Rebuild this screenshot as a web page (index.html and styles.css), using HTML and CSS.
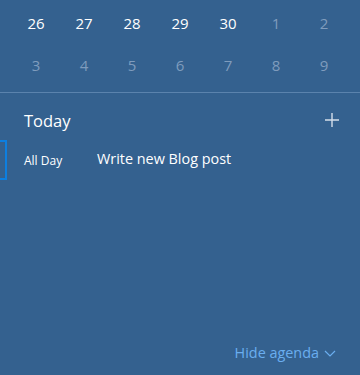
FILE: index.html
```html
<!DOCTYPE html>
<html>
<head>
<meta charset="utf-8">
<link rel="stylesheet" href="styles.css">
</head>
<body>
<div class="panel">
  <div class="cal">
    <span class="d">26</span><span class="d">27</span><span class="d">28</span><span class="d">29</span><span class="d">30</span><span class="d dim">1</span><span class="d dim">2</span>
    <span class="d dim">3</span><span class="d dim">4</span><span class="d dim">5</span><span class="d dim">6</span><span class="d dim">7</span><span class="d dim">8</span><span class="d dim">9</span>
  </div>
  <div class="divider"></div>
  <div class="agenda">
    <div class="head">
      <span class="today">Today</span>
      <svg class="plus" width="16" height="16" viewBox="0 0 16 16"><path d="M8 1v14M1 8h14" stroke="#d4deea" stroke-width="1.4" fill="none"/></svg>
    </div>
    <div class="event">
      <span class="mark"></span>
      <span class="when">All Day</span>
      <span class="title">Write new Blog post</span>
    </div>
  </div>
  <div class="foot">
    <span class="hide">Hide agenda</span>
    <svg class="chev" width="12" height="7" viewBox="0 0 12 7"><path d="M1 1l5 5 5-5" stroke="#6aaeef" stroke-width="1.2" fill="none"/></svg>
  </div>
</div>
</body>
</html>
```
FILE: styles.css
```css
html, body { margin: 0; padding: 0; }
body { background: #34618f; font-family: "Open Sans", "Noto Sans", sans-serif; }
.panel {
  width: 360px; height: 375px; background: #34618f;
  display: flex; flex-direction: column; overflow: hidden;
}
.cal {
  display: grid; grid-template-columns: repeat(7, 48px); grid-auto-rows: 42px;
  padding: 2px 12px 0; 
}
.d { display: flex; align-items: center; justify-content: center; color: #ffffff; font-size: 15px; }
.d.dim { color: #7f9cbd; }
.divider { height: 1px; background: #5b83ad; margin-top: 6px; }
.agenda { display: flex; flex-direction: column; }
.head {
  display: flex; align-items: center; justify-content: space-between;
  height: 28px; margin-top: 13px; padding: 0 20px 0 24px;
}
.today { color: #ffffff; font-size: 16.5px; }
.plus { display: block; }
.event {
  position: relative; display: flex; align-items: center; height: 40px; margin-top: 6px;
  padding-left: 24px;
}
.mark {
  position: absolute; left: -2px; top: 0; width: 5px; height: 36px;
  border: 2px solid #0d7fe0;
}
.when { color: #ffffff; font-size: 12px; width: 73px; }
.title { color: #ffffff; font-size: 14.4px; margin-top: -3px; }
.foot {
  margin-top: auto; display: flex; align-items: center; justify-content: flex-end;
  height: 22px; padding: 0 24px 12px 0; gap: 5px;
}
.hide { color: #6aaeef; font-size: 14.4px; }
.chev { display: block; margin-top: 2px; }
```
